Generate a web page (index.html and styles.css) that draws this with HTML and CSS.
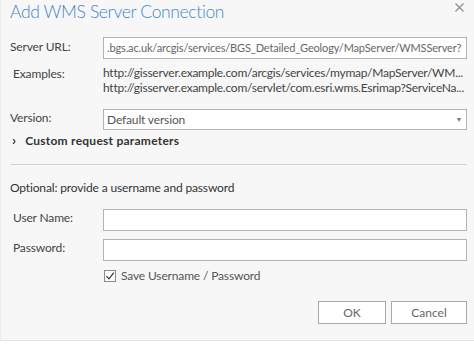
FILE: index.html
```html
<!DOCTYPE html>
<html lang="en">
<head>
    <meta charset="UTF-8">
    <title>Add WMS Server Connection</title>
    <link rel="stylesheet" href="styles.css">
</head>
<body>
    <div class="dialog">
        <div class="title-bar">
            <h1>Add WMS Server Connection</h1>
            <svg class="close" width="9" height="9" viewBox="0 0 9 9">
                <path d="M0.5 0.5 L8.5 8.5 M8.5 0.5 L0.5 8.5" stroke="#8a8a8a" stroke-width="1.1"/>
            </svg>
        </div>

        <div class="row url-row">
            <label class="label">Server URL:</label>
            <div class="field url">.bgs.ac.uk/arcgis/services/BGS_Detailed_Geology/MapServer/WMSServer?</div>
        </div>

        <div class="row examples">
            <div class="label indent">Examples:</div>
            <div class="example-list">
                <div>http://gisserver.example.com/arcgis/services/mymap/MapServer/WM...</div>
                <div>http://gisserver.example.com/servlet/com.esri.wms.Esrimap?ServiceNa...</div>
            </div>
        </div>

        <div class="row version-row">
            <label class="label">Version:</label>
            <div class="field select">
                <span>Default version</span>
                <span class="arrow">&#9662;</span>
            </div>
        </div>

        <div class="expander">
            <span class="chevron">&rsaquo;</span> Custom request parameters
        </div>

        <div class="separator"></div>

        <div class="optional">Optional: provide a username and password</div>

        <div class="row user-row">
            <label class="label indent">User Name:</label>
            <div class="field"></div>
        </div>

        <div class="row pass-row">
            <label class="label indent">Password:</label>
            <div class="field"></div>
        </div>

        <div class="save">
            <span class="check">
                <svg width="10" height="10" viewBox="0 0 10 10">
                    <path d="M1.5 5.2 L4 7.8 L8.8 1.6" fill="none" stroke="#333" stroke-width="1.2"/>
                </svg>
            </span>
            Save Username / Password
        </div>

        <div class="buttons">
            <button class="btn ok">OK</button>
            <button class="btn cancel">Cancel</button>
        </div>
    </div>
</body>
</html>
```

FILE: styles.css
```css
body {
    margin: 0;
    background: #ffffff;
    font-family: 'Lato', 'Noto Sans', sans-serif;
    font-size: 12px;
    letter-spacing: -0.15px;
    color: #444;
}
.dialog {
    height: 341px;
    box-sizing: border-box;
    background-color: #f7f7f7;
    border-left: 1px solid #ececec;
    border-bottom: 1px solid #e4e4e4;
    padding: 0 7px 0 9px;
}
.title-bar {
    display: flex;
    justify-content: space-between;
    align-items: flex-start;
    height: 24px;
}
h1 {
    margin: 0;
    font-size: 17.5px;
    font-weight: 300;
    letter-spacing: -0.35px;
    line-height: 24px;
    color: #4385c8;
    white-space: nowrap;
}
.close {
    margin-top: 3px;
    margin-right: 3px;
}
.row {
    display: flex;
    align-items: flex-start;
}
.label {
    width: 93px;
    flex-shrink: 0;
    line-height: 18px;
}
.label.indent {
    padding-left: 3px;
    width: 90px;
}
.field {
    flex: 1;
    min-width: 0;
    height: 22px;
    box-sizing: border-box;
    border: 1px solid #b4b4b4;
    background: #fff;
    padding: 0 3px;
    line-height: 20px;
    color: #555;
    white-space: nowrap;
    overflow: hidden;
}
.field.url {
    font-size: 11px;
    letter-spacing: -0.15px;
    color: #666;
}
.url-row {
    margin-top: 13px;
}
.url-row .label {
    padding-top: 1px;
}
.examples {
    margin-top: 6px;
}
.example-list {
    flex: 1;
    min-width: 0;
    line-height: 15px;
    letter-spacing: -0.25px;
    color: #444;
    white-space: nowrap;
    overflow: hidden;
}
.version-row {
    margin-top: 14px;
}
.select {
    display: flex;
    justify-content: space-between;
    height: 21px;
    line-height: 19px;
}
.arrow {
    font-size: 8px;
    color: #777;
    margin-right: 2px;
}
.expander {
    margin-top: 2px;
    padding-left: 2px;
    line-height: 16px;
    font-weight: bold;
    letter-spacing: 0.25px;
    color: #333;
}
.chevron {
    display: inline-block;
    width: 10px;
    font-size: 14px;
}
.separator {
    margin-top: 15px;
    height: 1px;
    background: #d2d2d2;
}
.optional {
    margin-top: 15px;
    line-height: 16px;
    color: #333;
}
.user-row {
    margin-top: 13px;
}
.pass-row {
    margin-top: 8px;
}
.save {
    margin-top: 7px;
    margin-left: 94px;
    display: flex;
    align-items: center;
    line-height: 16px;
    color: #555;
}
.check {
    width: 12px;
    height: 12px;
    box-sizing: border-box;
    border: 1px solid #8a8a8a;
    background: #fff;
    margin-right: 5px;
    display: flex;
    align-items: center;
    justify-content: center;
}
.buttons {
    margin-top: 17px;
    display: flex;
    justify-content: flex-end;
    gap: 5px;
}
.btn {
    height: 23px;
    background: #fff;
    border: 1px solid #a8a8a8;
    font-family: inherit;
    font-size: 12px;
    color: #666;
}
.btn.ok {
    width: 68px;
}
.btn.cancel {
    width: 76px;
}
```
